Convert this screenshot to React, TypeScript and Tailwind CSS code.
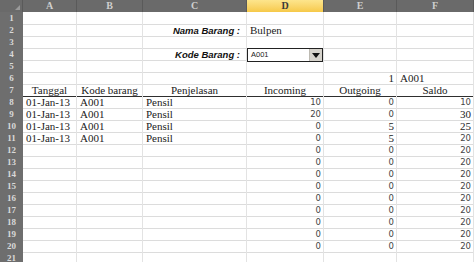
import React from 'react';

type Cell = { t: string; align?: 'l' | 'r' | 'c'; num?: boolean };

const cols = ['A', 'B', 'C', 'D', 'E', 'F'];

// per-row content for columns A..F
const n = (t: string, serif = false): Cell => ({ t, align: 'r', num: !serif });

const rows: (Cell | null)[][] = [];
for (let i = 1; i <= 21; i++) rows.push([null, null, null, null, null, null]);

rows[5][4] = { t: '1', align: 'r' };
rows[5][5] = { t: 'A001', align: 'l' };
rows[6] = [
  { t: 'Tanggal', align: 'c' },
  { t: 'Kode barang', align: 'c' },
  { t: 'Penjelasan', align: 'c' },
  { t: 'Incoming', align: 'c' },
  { t: 'Outgoing', align: 'c' },
  { t: 'Saldo', align: 'c' },
];
const data: [string, string, Cell, Cell, Cell][] = [
  ['01-Jan-13', 'A001', n('10'), n('0'), n('10')],
  ['01-Jan-13', 'A001', n('20'), n('0'), n('30', true)],
  ['01-Jan-13', 'A001', n('0'), n('5', true), n('25', true)],
  ['01-Jan-13', 'A001', n('0'), n('5', true), n('20')],
];
data.forEach((d, i) => {
  rows[7 + i] = [
    { t: d[0], align: 'l' },
    { t: d[1], align: 'l' },
    { t: 'Pensil', align: 'l' },
    d[2],
    d[3],
    d[4],
  ];
});
for (let r = 11; r < 20; r++) {
  rows[r] = [null, null, null, n('0'), n('0'), n('20')];
}

const App: React.FC = () => {
  return (
    <div className="w-[474px] h-[262px] overflow-hidden bg-white font-['Liberation_Serif',serif] text-[#222]">
      {/* Column headers */}
      <div className="grid grid-cols-[23px_54px_66px_104px_77px_73px_1fr] h-[12px] bg-[#6a6a6a]">
        <div className="relative border-r border-[#5a5a5a]">
          <div className="absolute right-[2px] bottom-[2px] w-0 h-0 border-l-[5px] border-l-transparent border-b-[5px] border-b-[#9a9a9a]" />
        </div>
        {cols.map((c) => (
          <div
            key={c}
            className={`flex items-center justify-center border-r border-[#5a5a5a] text-[10px] leading-[12px] font-bold ${
              c === 'D' ? 'bg-gradient-to-b from-[#fde58c] to-[#f6c948] text-[#3a3a3a]' : 'text-[#cfcfcf]'
            }`}
          >
            {c}
          </div>
        ))}
      </div>

      {rows.map((row, ri) => {
        const isHead = ri === 6;
        return (
          <div key={ri} className="grid grid-cols-[23px_54px_66px_104px_77px_73px_1fr] h-[12px]">
            <div
              className={`flex items-center justify-center bg-[#6e6e6e] text-[#d9d9d9] text-[9px] font-bold leading-[12px] border-b ${
                isHead ? 'border-[#3a3a3a]' : 'border-[#858585]'
              }`}
            >
              {ri + 1}
            </div>
            {row.map((cell, ci) => {
              const border = isHead ? 'border-b-[1.5px] border-b-[#2e2e2e]' : 'border-b border-b-[#dcdcdc]';
              let content: React.ReactNode = null;
              if (ri === 1 && ci === 2) {
                content = (
                  <span className="w-full pr-[6px] text-right font-['Liberation_Sans',sans-serif] font-bold italic text-[9.5px] text-[#111]">
                    Nama Barang :
                  </span>
                );
              } else if (ri === 3 && ci === 2) {
                content = (
                  <span className="w-full pr-[6px] text-right font-['Liberation_Sans',sans-serif] font-bold italic text-[9.5px] text-[#111]">
                    Kode Barang :
                  </span>
                );
              } else if (ri === 1 && ci === 3) {
                content = <span className="pl-[3px] text-[11px]">Bulpen</span>;
              } else if (ri === 3 && ci === 3) {
                content = (
                  <div className="absolute left-0 top-0 z-10 flex h-[14px] w-[76px] border border-[#222] bg-white">
                    <span className="flex-1 pl-[3px] font-['Liberation_Sans',sans-serif] text-[7.5px] leading-[12px] text-[#222]">
                      A001
                    </span>
                    <div className="flex w-[13px] items-center justify-center bg-[#d6d3cc] border-l border-[#bdbab2]">
                      <div className="w-0 h-0 border-l-[4px] border-r-[4px] border-t-[5px] border-l-transparent border-r-transparent border-t-[#111]" />
                    </div>
                  </div>
                );
              } else if (cell) {
                const al =
                  cell.align === 'r' ? 'justify-end pr-[2px]' : cell.align === 'c' ? 'justify-center' : 'justify-start pl-[3px]';
                content = (
                  <span
                    className={`flex w-full ${al} ${
                      cell.num
                        ? "font-['DejaVu_Sans',sans-serif] font-medium text-[8.5px] text-[#444]"
                        : 'text-[11px]'
                    }`}
                  >
                    {cell.t}
                  </span>
                );
              }
              return (
                <div
                  key={ci}
                  className={`relative flex items-end leading-[11px] whitespace-nowrap border-r border-r-[#e3e3e3] ${border}`}
                >
                  {content}
                </div>
              );
            })}
          </div>
        );
      })}
    </div>
  );
};

export default App;
